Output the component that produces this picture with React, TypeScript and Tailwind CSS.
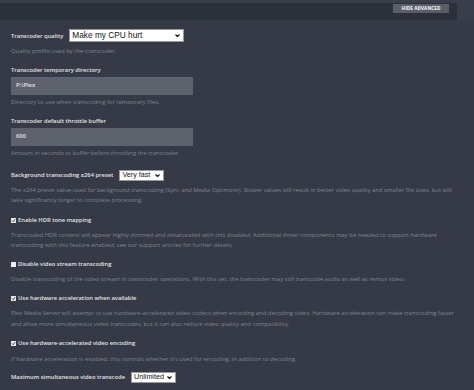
const FONT = "font-['Open_Sans',_'Liberation_Sans',_sans-serif]";

function Chevron() {
  return (
    <svg viewBox="0 0 10 6" className="w-[5px] h-[3px] shrink-0">
      <path d="M1 1 L5 5 L9 1" fill="none" stroke="#111" strokeWidth="2.4" />
    </svg>
  );
}

function Select({ value, width, big }: { value: string; width: string; big?: boolean }) {
  return (
    <div
      className={`flex items-center justify-between bg-white border border-[#9a9a9a] pl-[2px] pr-[3px] ${width} ${
        big ? 'h-[13px] text-[8.3px]' : 'h-[11px] text-[7.2px]'
      } font-['Liberation_Sans',_Arial,_sans-serif] text-[#111] leading-none`}
    >
      <span>{value}</span>
      <Chevron />
    </div>
  );
}

function Desc({ lines, className }: { lines: string[]; className?: string }) {
  return (
    <div className={`text-[5.9px] leading-[10.5px] text-[#80848d] whitespace-nowrap ${className ?? ''}`}>
      {lines.map((l) => (
        <div key={l}>{l}</div>
      ))}
    </div>
  );
}

function Label({ children, className }: { children: string; className?: string }) {
  return (
    <div className={`text-[5.8px] leading-[10px] font-semibold text-[#e4e5e8] whitespace-nowrap ${className ?? ''}`}>
      {children}
    </div>
  );
}

function Check({ checked, label, className }: { checked: boolean; label: string; className?: string }) {
  return (
    <div className={`flex items-center h-[10px] ${className ?? ''}`}>
      <div className="w-[5px] h-[5px] bg-[#ececec] flex items-center justify-center">
        {checked && (
          <svg viewBox="0 0 10 10" className="w-[5px] h-[5px]">
            <path d="M2 5 L4.3 7.4 L8.3 2.3" fill="none" stroke="#333" strokeWidth="1.8" />
          </svg>
        )}
      </div>
      <span className="ml-[2px] text-[5.8px] font-semibold text-[#e4e5e8] whitespace-nowrap">{label}</span>
    </div>
  );
}

function TextInput({ value, className }: { value: string; className?: string }) {
  return (
    <div
      className={`w-[182px] h-[18px] bg-[#5e626c] flex items-center pl-[5px] text-[5.8px] font-semibold text-[#e4e5e8] ${
        className ?? ''
      }`}
    >
      {value}
    </div>
  );
}

export default function App() {
  return (
    <div className={`w-[474px] h-[390px] overflow-hidden bg-[#363a46] ${FONT}`}>
      {/* toolbar */}
      <div className="flex">
        <div className="w-[457px] h-[20px] bg-[#2c303b] border-t-[3px] border-[#3a3e4a] flex items-start justify-end pr-[8px]">
          <div className="mt-[1px] w-[56px] h-[9px] bg-[#5a5e68] text-white text-[4.6px] font-bold flex items-center justify-center tracking-[0.1px]">
            HIDE ADVANCED
          </div>
        </div>
        <div className="flex-1 h-[20px] bg-[#3a3e4a]" />
      </div>

      <div className="px-[11px] flex flex-col items-start">
        <div className="mt-[9px] flex items-center gap-[6px]">
          <Label>Transcoder quality</Label>
          <Select value="Make my CPU hurt" width="w-[115px]" big />
        </div>
        <Desc className="mt-[3.5px]" lines={['Quality profile used by the transcoder.']} />

        <Label className="mt-[8.5px]">Transcoder temporary directory</Label>
        <TextInput className="mt-[2px]" value="P:\Plex" />
        <Desc className="mt-[2.5px]" lines={['Directory to use when transcoding for temporary files.']} />

        <Label className="mt-[8.5px]">Transcoder default throttle buffer</Label>
        <TextInput className="mt-[1.5px]" value="600" />
        <Desc className="mt-[2.5px]" lines={['Amount in seconds to buffer before throttling the transcoder.']} />

        <div className="mt-[11px] flex items-center gap-[6px]">
          <Label>Background transcoding x264 preset</Label>
          <Select value="Very fast" width="w-[45px]" />
        </div>
        <Desc
          className="mt-[4px]"
          lines={[
            'The x264 preset value used for background transcoding (Sync and Media Optimizer). Slower values will result in better video quality and smaller file sizes, but will',
            'take significantly longer to complete processing.',
          ]}
        />

        <Check className="mt-[9.5px]" checked label="Enable HDR tone mapping" />
        <Desc
          className="mt-[4.5px]"
          lines={[
            'Transcoded HDR content will appear highly dimmed and desaturated with this disabled. Additional driver components may be needed to support hardware',
            'transcoding with this feature enabled; see our support articles for further details.',
          ]}
        />

        <Check className="mt-[8.5px]" checked={false} label="Disable video stream transcoding" />
        <Desc
          className="mt-[5px]"
          lines={[
            'Disable transcoding of the video stream in transcoder operations. With this set, the transcoder may still transcode audio as well as remux video.',
          ]}
        />

        <Check className="mt-[9px]" checked label="Use hardware acceleration when available" />
        <Desc
          className="mt-[4.5px]"
          lines={[
            'Plex Media Server will attempt to use hardware-accelerated video codecs when encoding and decoding video. Hardware acceleration can make transcoding faster',
            'and allow more simultaneous video transcodes, but it can also reduce video quality and compatibility.',
          ]}
        />

        <Check className="mt-[9px]" checked label="Use hardware-accelerated video encoding" />
        <Desc
          className="mt-[5.5px]"
          lines={["If hardware acceleration is enabled, this controls whether it's used for encoding, in addition to decoding."]}
        />

        <div className="mt-[7.5px] flex items-center gap-[6px]">
          <Label>Maximum simultaneous video transcode</Label>
          <Select value="Unlimited" width="w-[45px]" />
        </div>
      </div>
    </div>
  );
}
